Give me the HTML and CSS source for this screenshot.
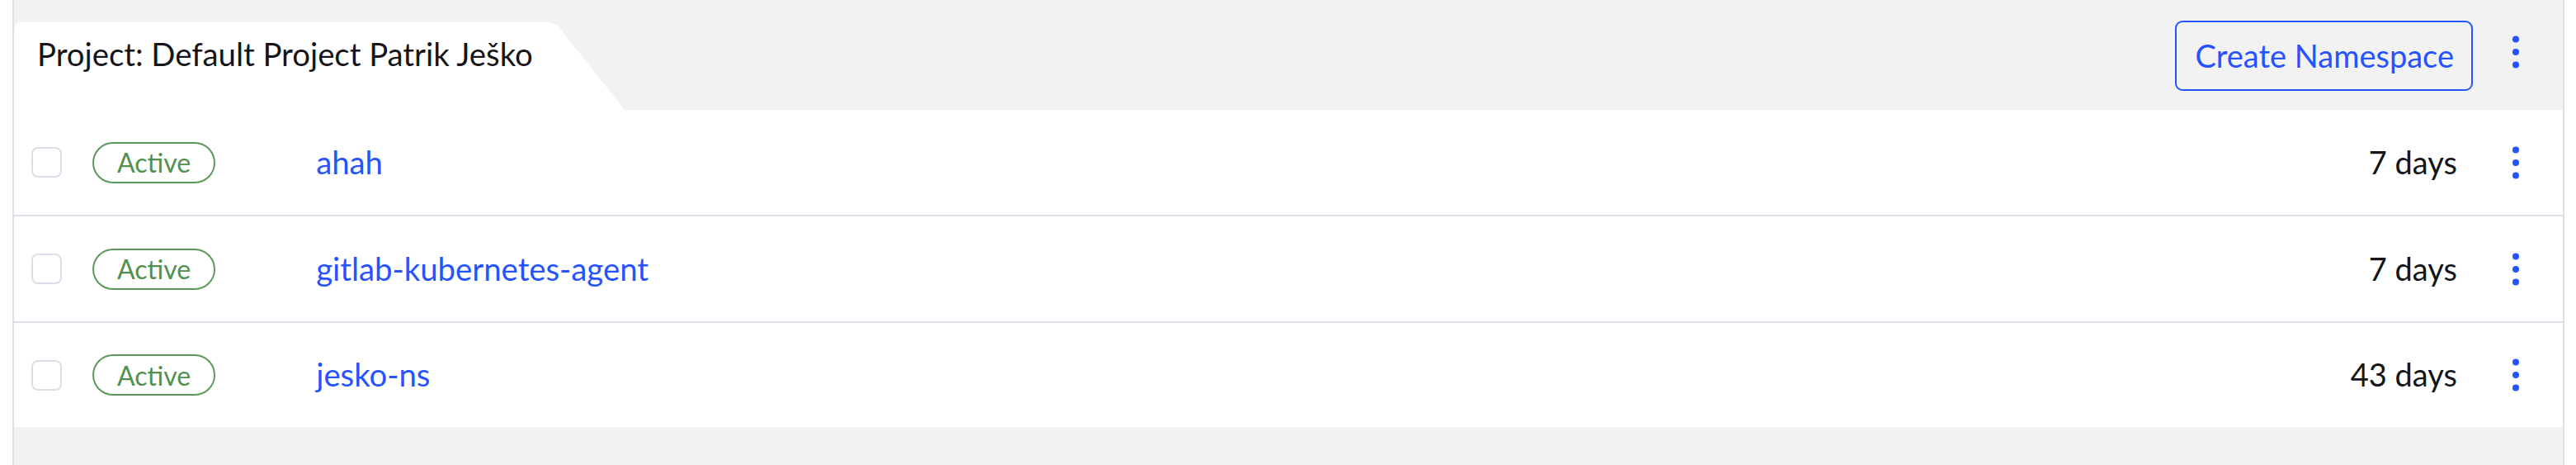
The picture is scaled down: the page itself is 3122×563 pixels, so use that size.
FILE: index.html
```html
<!DOCTYPE html>
<html lang="en">
<head>
<meta charset="utf-8">
<title>Namespaces</title>
<link rel="stylesheet" href="styles.css">
</head>
<body>
<div class="page">
  <div class="group-header">
    <div class="tab"><span class="tab-title">Project: Default Project Patrik Ješko</span></div>
    <div class="actions">
      <button class="btn-outline" type="button">Create Namespace</button>
      <span class="kebab kebab-header">
        <svg width="16" height="40" viewBox="0 0 16 40"><circle cx="8" cy="4.5" r="4"/><circle cx="8" cy="20" r="4"/><circle cx="8" cy="35.5" r="4"/></svg>
      </span>
    </div>
  </div>
  <div class="rows">
    <div class="row">
      <span class="checkbox"></span>
      <span class="badge">Active</span>
      <a class="name" href="#">ahah</a>
      <span class="age">7 days</span>
      <span class="kebab"><svg width="16" height="40" viewBox="0 0 16 40"><circle cx="8" cy="4.5" r="4"/><circle cx="8" cy="20" r="4"/><circle cx="8" cy="35.5" r="4"/></svg></span>
    </div>
    <div class="row">
      <span class="checkbox"></span>
      <span class="badge">Active</span>
      <a class="name" href="#">gitlab-kubernetes-agent</a>
      <span class="age">7 days</span>
      <span class="kebab"><svg width="16" height="40" viewBox="0 0 16 40"><circle cx="8" cy="4.5" r="4"/><circle cx="8" cy="20" r="4"/><circle cx="8" cy="35.5" r="4"/></svg></span>
    </div>
    <div class="row">
      <span class="checkbox"></span>
      <span class="badge">Active</span>
      <a class="name" href="#">jesko-ns</a>
      <span class="age">43 days</span>
      <span class="kebab"><svg width="16" height="40" viewBox="0 0 16 40"><circle cx="8" cy="4.5" r="4"/><circle cx="8" cy="20" r="4"/><circle cx="8" cy="35.5" r="4"/></svg></span>
    </div>
  </div>
</div>
</body>
</html>
```

FILE: styles.css
```css
html, body {
  margin: 0;
  padding: 0;
  background: #ffffff;
}
body {
  font-family: Lato, "Open Sans", "Liberation Sans", sans-serif;
  color: #141419;
}
.page {
  margin-left: 15px;
  width: 3093px;
  height: 563px;
  box-sizing: border-box;
  border-left: 2px solid #dcdee8;
  border-right: 2px solid #dcdee8;
  background: #f2f2f2;
}
.group-header {
  display: flex;
  height: 133px;
}
.tab {
  align-self: flex-end;
  width: 740px;
  height: 106px;
  box-sizing: border-box;
  padding: 16px 0 0 28px;
  background: #ffffff;
  border-top-left-radius: 8px;
  clip-path: polygon(0 0, 650px 0, 658px 3px, 100% 100%, 0 100%);
}
.tab-title {
  font-size: 38.3px;
  line-height: 1.2;
  white-space: nowrap;
}
.actions {
  margin-left: auto;
  display: flex;
  align-items: flex-start;
  padding-top: 25px;
  padding-right: 49px;
}
.btn-outline {
  height: 85px;
  box-sizing: border-box;
  padding: 0 21px 0 22px;
  display: flex;
  align-items: center;
  border: 2px solid #2453ff;
  border-radius: 9px;
  background: transparent;
  color: #2453ff;
  font-family: Lato, "Open Sans", "Liberation Sans", sans-serif;
  font-size: 38px;
  line-height: 1.2;
  margin-right: 44px;
}
.kebab {
  display: flex;
  fill: #2453ff;
}
.kebab svg {
  display: block;
}
.kebab-header {
  margin-top: 18px;
}
.rows {
  background: #ffffff;
}
.row {
  display: flex;
  align-items: center;
  height: 129px;
  box-sizing: border-box;
  border-bottom: 2px solid #dcdee8;
  padding: 0 49px 0 21px;
}
.row:last-child {
  border-bottom: none;
  height: 126px;
}
.checkbox {
  width: 37px;
  height: 37px;
  box-sizing: border-box;
  border: 2px solid #dcdde8;
  border-radius: 8px;
  background: #ffffff;
  flex: none;
}
.badge {
  margin-left: 37px;
  height: 50px;
  box-sizing: border-box;
  padding: 2px 28px 0 28px;
  display: flex;
  align-items: center;
  border: 2px solid #5c985c;
  border-radius: 25px;
  color: #51904f;
  font-size: 32px;
  line-height: 1.2;
  flex: none;
}
.name {
  margin-left: 122px;
  color: #2453ff;
  text-decoration: none;
  font-size: 38.3px;
  line-height: 1.2;
}
.age {
  margin-left: auto;
  font-size: 38px;
  line-height: 1.2;
  margin-right: 63px;
}
```
